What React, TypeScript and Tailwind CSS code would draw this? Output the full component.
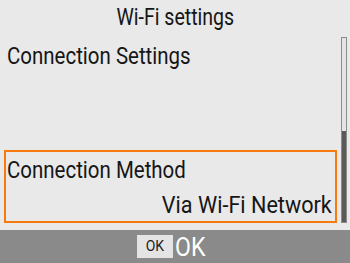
const narrow = 'inline-block scale-x-[0.89]';

export default function App() {
  return (
    <div
      className="flex h-[263px] w-[350px] flex-col overflow-hidden bg-[#e9e9e9] text-[#161616]"
      style={{ fontFamily: 'Roboto, "Noto Sans", sans-serif' }}
    >
      <div className="h-[37px] pt-[5px] text-center text-[23px] leading-[26px]">
        <span className="inline-block origin-center scale-x-[0.85]">Wi-Fi settings</span>
      </div>

      <div className="flex flex-1 pb-[7px]">
        <div className="flex flex-1 flex-col pl-[4px]">
          <div className="pl-[3px] pt-[7px] text-[23px] leading-[26px]">
            <span className={`${narrow} origin-left`}>Connection Settings</span>
          </div>

          <div className="mt-auto flex h-[73px] flex-col border-2 border-[#f77a10] pl-[1px] pr-[3px]">
            <div className="pt-[6px] text-[23px] leading-[26px]">
              <span className={`${narrow} origin-left`}>Connection Method</span>
            </div>
            <div className="pt-[9px] text-right text-[23px] leading-[26px]">
              <span className="inline-block origin-right scale-x-[0.94]">Via Wi-Fi Network</span>
            </div>
          </div>
        </div>

        {/* scroll bar */}
        <div className="ml-[4px] mr-[3px] flex w-[6px] flex-col border border-[#8c8c8c]">
          <div className="h-[93px] bg-[#e4e4e4]" />
          <div className="flex-1 bg-[#5a5a5a]" />
        </div>
      </div>

      <div className="flex h-[33px] items-center justify-center gap-[2px] bg-[#8a8a8a] pr-[4px]">
        <span className="flex h-[23px] w-[36px] items-center justify-center bg-[#e4e4e4] text-[14px] text-[#222]">OK</span>
        <span className={`${narrow} origin-left text-[26px] leading-none text-white`}>OK</span>
      </div>
    </div>
  );
}
